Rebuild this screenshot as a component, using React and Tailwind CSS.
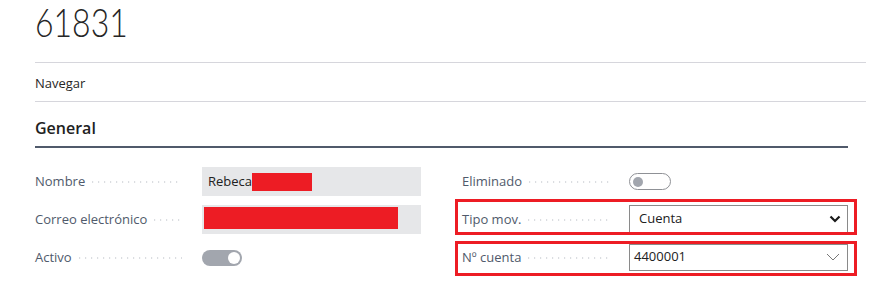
import React from "react";

function Leader() {
  return (
    <svg className="flex-1 h-[2px] mx-[6px]" preserveAspectRatio="none">
      <line x1="1" y1="1" x2="100%" y2="1" stroke="#b8bcc4" strokeWidth="1.2" strokeDasharray="1.2 4.8" />
    </svg>
  );
}

function Label({ children }) {
  return (
    <div className="w-[160px] shrink-0 flex items-center pr-[7px] mr-[7px]">
      <span className="text-[13px] text-[#505a6b] whitespace-nowrap">{children}</span>
      <Leader />
    </div>
  );
}

function ToggleOn() {
  return (
    <div className="w-[40px] h-[16px] rounded-full bg-[#a2a6ae] flex items-center justify-end pr-[2px]">
      <div className="w-[12px] h-[12px] rounded-full bg-white" />
    </div>
  );
}

function ToggleOff() {
  return (
    <div className="w-[42px] h-[17px] rounded-full border border-[#8f9196] bg-white flex items-center pl-[3px]">
      <div className="w-[10px] h-[10px] rounded-full bg-[#a2a6ae]" />
    </div>
  );
}

export default function App() {
  return (
    <div className="w-[891px] h-[299px] bg-white font-['Open_Sans',sans-serif] pl-[35px] pr-[25px] overflow-hidden">
      <div className="h-[62px] pt-[2px]">
        <div className="inline-block origin-left scale-x-[0.8] text-[40px] leading-[40px] font-light font-['Lato',sans-serif] text-[#262626]">
          61831
        </div>
      </div>
      <div className="border-t border-[#d6d6dc] h-[39px] flex items-center pt-[3px]">
        <span className="text-[13px] text-[#262626]">Navegar</span>
      </div>
      <div className="border-t border-[#d6d6dc]">
        <div className="mr-[18px]">
          <div className="h-[46px] flex items-end pb-[7px] border-b-2 border-[#505a6b]">
            <span className="text-[16px] leading-[22px] font-semibold text-[#212121]">General</span>
          </div>
          <div className="flex gap-[41px] pt-[19px]">
            {/* left column */}
            <div className="w-[386px] flex flex-col gap-[9px]">
              <div className="h-[29px] flex items-center">
                <Label>Nombre</Label>
                <div className="w-[219px] h-[29px] bg-[#e6e7e9] flex items-center pl-[6px] text-[13px] text-[#212121]">
                  <span>Rebeca</span>
                  <div className="w-[60px] h-[18px] bg-[#ed1c24]" />
                </div>
              </div>
              <div className="h-[29px] flex items-center">
                <Label>Correo electrónico</Label>
                <div className="w-[219px] h-[29px] bg-[#e6e7e9] flex items-start pl-[2px] pt-[2px]">
                  <div className="w-[194px] h-[22px] bg-[#ed1c24]" />
                </div>
              </div>
              <div className="h-[29px] flex items-center">
                <Label>Activo</Label>
                <ToggleOn />
              </div>
            </div>
            {/* right column */}
            <div className="w-[386px] flex flex-col gap-[9px]">
              <div className="h-[29px] flex items-center">
                <Label>Eliminado</Label>
                <ToggleOff />
              </div>
              <div className="relative h-[29px] flex items-center">
                <Label>Tipo mov.</Label>
                <div className="w-[219px] h-[29px] border border-[#8a8a8a] flex items-center pl-[9px] pr-[6px] text-[13px] text-[#212121] -mt-[1px]">
                  <span className="flex-1">Cuenta</span>
                  <svg width="12" height="8" viewBox="0 0 12 8">
                    <path d="M1.5 1.5 L6 6 L10.5 1.5" fill="none" stroke="#1a1a1a" strokeWidth="2.2" />
                  </svg>
                </div>
                <div className="absolute left-[-7px] right-[-9px] top-[-6px] bottom-[-1px] border-[3px] border-[#ed1c24] pointer-events-none" />
              </div>
              <div className="relative h-[29px] flex items-center">
                <Label>Nº cuenta</Label>
                <div className="w-[219px] h-[27px] border border-[#8a8a8a] flex items-center pl-[4px] pr-[7px] text-[13px] text-[#212121] -mt-[1px]">
                  <span className="flex-1">4400001</span>
                  <svg width="14" height="8" viewBox="0 0 14 8">
                    <path d="M1 1 L7 7 L13 1" fill="none" stroke="#777" strokeWidth="1" />
                  </svg>
                </div>
                <div className="absolute left-[-7px] right-[-9px] top-[-2px] bottom-[-4px] border-[3px] border-[#ed1c24] pointer-events-none" />
              </div>
            </div>
          </div>
        </div>
      </div>
    </div>
  );
}
